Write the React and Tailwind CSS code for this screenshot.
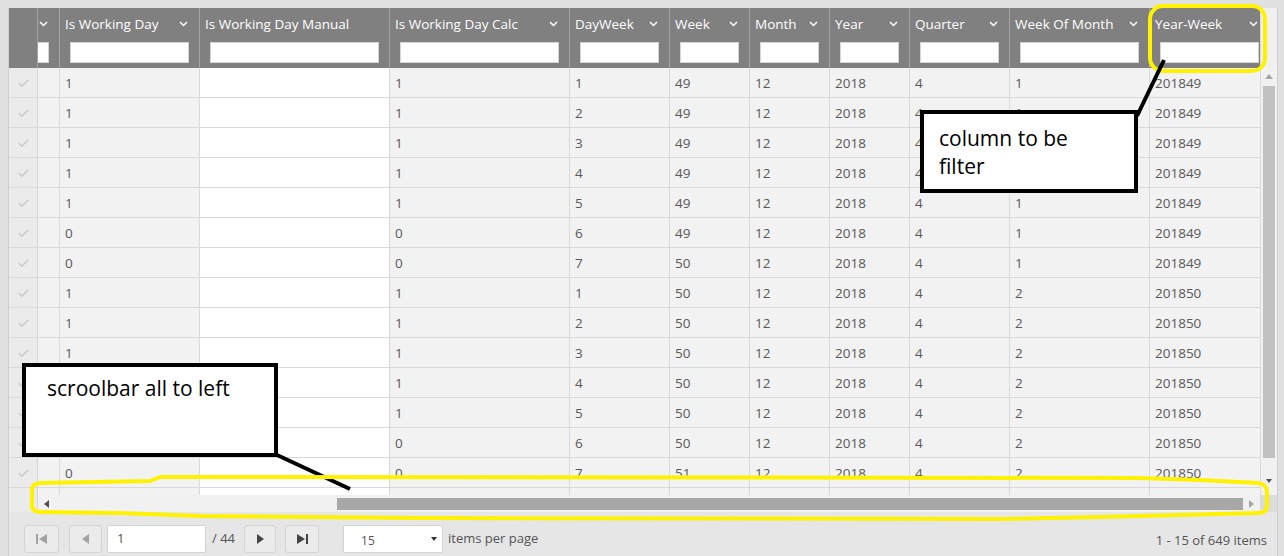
import React from "react";
import { Check } from "lucide-react";

const columns = [
  { title: "Is Working Day", width: 140, key: "iwd" },
  { title: "Is Working Day Manual", width: 190, key: "manual", noMenu: true, white: true },
  { title: "Is Working Day Calc", width: 180, key: "calc" },
  { title: "DayWeek", width: 100, key: "dw" },
  { title: "Week", width: 80, key: "week" },
  { title: "Month", width: 80, key: "month" },
  { title: "Year", width: 80, key: "year" },
  { title: "Quarter", width: 100, key: "q" },
  { title: "Week Of Month", width: 140, key: "wom" },
  { title: "Year-Week", width: 120, key: "yw" },
];

const raw = [
  [1, 1, 1, 49, 1, 201849],
  [1, 1, 2, 49, 1, 201849],
  [1, 1, 3, 49, 1, 201849],
  [1, 1, 4, 49, 1, 201849],
  [1, 1, 5, 49, 1, 201849],
  [0, 0, 6, 49, 1, 201849],
  [0, 0, 7, 50, 1, 201849],
  [1, 1, 1, 50, 2, 201850],
  [1, 1, 2, 50, 2, 201850],
  [1, 1, 3, 50, 2, 201850],
  [1, 1, 4, 50, 2, 201850],
  [1, 1, 5, 50, 2, 201850],
  [0, 0, 6, 50, 2, 201850],
  [0, 0, 7, 51, 2, 201850],
];

const rows = raw.map(([iwd, calc, dw, week, wom, yw]) => ({
  iwd,
  manual: "",
  calc,
  dw,
  week,
  month: 12,
  year: 2018,
  q: 4,
  wom,
  yw,
}));
// last row sits under the scrollbar, only its top edge shows
rows.push({});

const Chevron = () => (
  <svg width="9" height="6" viewBox="0 0 9 6" className="shrink-0">
    <path d="M1 1 L4.5 4.5 L8 1" fill="none" stroke="#ffffff" strokeWidth="1.5" />
  </svg>
);

const HeaderCell = ({ col }) => (
  <div
    className="flex flex-col shrink-0 border-l border-[#a3a3a3] overflow-hidden"
    style={{ width: col.width }}
  >
    <div className="h-[30px] flex items-center justify-between pl-[5px] pr-[11px] pt-[2px]">
      <span className="text-white text-[13.5px] whitespace-nowrap">{col.title}</span>
      {!col.noMenu && <Chevron />}
    </div>
    <div className="pl-[10px] pr-[10px] mt-[4px]">
      <div className="h-[21px] bg-white border border-[#d5d5d5]" />
    </div>
  </div>
);

// leftover column, scrolled nearly out of view
const PartialHeaderCell = () => (
  <div className="flex flex-col shrink-0 w-[21px] overflow-hidden">
    <div className="h-[30px] flex items-center justify-end pr-[11px] pt-[2px]">
      <Chevron />
    </div>
    <div className="flex justify-end pr-[10px] mt-[4px]">
      <div className="h-[21px] w-[100px] shrink-0 bg-white border border-[#d5d5d5]" />
    </div>
  </div>
);

const TriUp = ({ color = "#a6a6a6" }) => (
  <svg width="8" height="5" viewBox="0 0 8 5">
    <path d="M0 5 L4 0 L8 5 Z" fill={color} />
  </svg>
);
const TriDown = ({ color = "#505050" }) => (
  <svg width="6" height="4" viewBox="0 0 6 4">
    <path d="M0 0 L3 4 L6 0 Z" fill={color} />
  </svg>
);
const TriLeft = ({ color = "#505050" }) => (
  <svg width="5" height="8" viewBox="0 0 5 8">
    <path d="M5 0 L0 4 L5 8 Z" fill={color} />
  </svg>
);
const TriRight = ({ color = "#a6a6a6" }) => (
  <svg width="5" height="8" viewBox="0 0 5 8">
    <path d="M0 0 L5 4 L0 8 Z" fill={color} />
  </svg>
);

const PagerButton = ({ w, children }) => (
  <div
    className="h-[28px] flex items-center justify-center bg-[#ebebeb] border border-[#d3d3d3] rounded-[3px]"
    style={{ width: w }}
  >
    {children}
  </div>
);

const FirstIcon = ({ color }) => (
  <svg width="14" height="12" viewBox="0 0 14 12">
    <rect x="1" y="1" width="2" height="10" fill={color} />
    <path d="M12 1 L4 6 L12 11 Z" fill={color} />
  </svg>
);
const PrevIcon = ({ color }) => (
  <svg width="10" height="12" viewBox="0 0 10 12">
    <path d="M8 1 L1 6 L8 11 Z" fill={color} />
  </svg>
);
const NextIcon = ({ color }) => (
  <svg width="10" height="12" viewBox="0 0 10 12">
    <path d="M2 1 L9 6 L2 11 Z" fill={color} />
  </svg>
);
const LastIcon = ({ color }) => (
  <svg width="14" height="12" viewBox="0 0 14 12">
    <path d="M2 1 L10 6 L2 11 Z" fill={color} />
    <rect x="11" y="1" width="2" height="10" fill={color} />
  </svg>
);

export default function App() {
  return (
    <div className="relative w-[1284px] h-[556px] overflow-hidden bg-[#e1e1e1] font-['Open_Sans',sans-serif]">
      <div className="pt-[8px] pl-[8px]">
        <div className="w-[1270px] border-l border-r border-[#cfcfcf] bg-[#e6e6e6]">
          {/* header */}
          <div className="flex h-[60px]">
            <div className="w-[29px] shrink-0 bg-[#808080] border-r border-[#a3a3a3]" />
            <div className="w-[1222px] shrink-0 flex overflow-hidden bg-[#808080]">
              <PartialHeaderCell />
              {columns.map((col) => (
                <HeaderCell key={col.key} col={col} />
              ))}
            </div>
            <div className="w-[17px] shrink-0 bg-[#f0f0f0] border-l border-[#dadada]" />
          </div>

          {/* body */}
          <div className="flex h-[444px]">
            {/* locked check column */}
            <div className="w-[29px] shrink-0 flex flex-col bg-[#ebebeb] border-r border-[#d6d6d6]">
              <div className="h-[427px] overflow-hidden">
                {rows.slice(0, 14).map((r, i) => (
                  <div key={i} className="h-[30px] flex items-center justify-center border-b border-[#dadada] pt-[2px]">
                    <Check size={13} strokeWidth={2.5} color="#c9c9c9" />
                  </div>
                ))}
              </div>
            </div>

            <div className="w-[1222px] shrink-0 flex flex-col">
              <div className="h-[427px] overflow-hidden bg-[#f2f2f2]">
                {rows.map((r, i) => (
                  <div key={i} className="flex h-[30px] border-b border-[#d9d9d9] text-[13.5px] text-[#595959]">
                    <div className="w-[21px] shrink-0" />
                    {columns.map((col) => (
                      <div
                        key={col.key}
                        className={`shrink-0 flex items-center pl-[5px] pt-[2px] border-l border-[#d9d9d9] ${col.white ? "bg-white" : ""}`}
                        style={{ width: col.width }}
                      >
                        {r[col.key]}
                      </div>
                    ))}
                  </div>
                ))}
              </div>
              {/* horizontal scrollbar */}
              <div className="h-[17px] flex items-center bg-[#f1f1f1]">
                <div className="w-[17px] h-full flex items-center justify-center">
                  <TriLeft />
                </div>
                <div className="flex-1 h-full flex items-center">
                  <div className="ml-[282px] h-[12px] flex-1 bg-[#a8a8a8]" />
                </div>
                <div className="w-[17px] h-full flex items-center justify-center">
                  <TriRight />
                </div>
              </div>
            </div>

            {/* vertical scrollbar */}
            <div className="w-[17px] shrink-0 flex flex-col border-l border-[#dadada]">
              <div className="h-[427px] flex flex-col bg-[#f1f1f1]">
                <div className="h-[17px] flex items-center justify-center">
                  <TriUp />
                </div>
                <div className="flex-1 px-[2px] pt-[1px] pb-[20px]">
                  <div className="w-full h-full bg-[#c1c1c1]" />
                </div>
                <div className="h-[17px] flex items-start justify-center pt-[1px]">
                  <TriDown />
                </div>
              </div>
              <div className="h-[17px] bg-[#dcdcdc]" />
            </div>
          </div>

          {/* pager */}
          <div className="h-[60px] flex items-start pt-[13px] pl-[15px] pr-[10px] text-[13px] text-[#555555]">
            <PagerButton w={35}>
              <FirstIcon color="#a3a3a3" />
            </PagerButton>
            <div className="ml-[10px]">
              <PagerButton w={33}>
                <PrevIcon color="#a3a3a3" />
              </PagerButton>
            </div>
            <div className="ml-[5px] w-[99px] h-[28px] bg-white border border-[#d3d3d3] rounded-[2px] flex items-center pl-[9px]">
              1
            </div>
            <span className="ml-[6px] h-[28px] flex items-center">/ 44</span>
            <div className="ml-[9px]">
              <PagerButton w={32}>
                <NextIcon color="#444444" />
              </PagerButton>
            </div>
            <div className="ml-[9px]">
              <PagerButton w={34}>
                <LastIcon color="#444444" />
              </PagerButton>
            </div>
            <div className="ml-[24px] w-[100px] h-[28px] bg-white border border-[#d3d3d3] rounded-[2px] flex items-center justify-between pl-[17px] pr-[5px] text-[12px]">
              <span className="mt-[3px]">15</span>
              <TriDown color="#333333" />
            </div>
            <span className="ml-[5px] h-[28px] flex items-center">items per page</span>
            <span className="ml-auto h-[28px] flex items-center mt-[2px]">1 - 15 of 649 items</span>
          </div>
        </div>
      </div>

      {/* annotations drawn over the grid */}
      <svg className="absolute inset-0 pointer-events-none" width="1284" height="556" viewBox="0 0 1284 556">
        <rect x="1150" y="6" width="115" height="65" rx="13" fill="none" stroke="#fff200" strokeWidth="4" />
        <line x1="1137" y1="116" x2="1164" y2="60" stroke="#000" strokeWidth="4" />
        <line x1="277" y1="455" x2="350" y2="489" stroke="#000" strokeWidth="4" />
        <path
          d="M40 483 L150 481 L160 477 L1140 478 L1200 480 L1258 483 Q1267 484 1267 492 L1267 506 Q1267 513 1258 513 L1100 517 L1000 519 L420 518 L200 516 L120 513 L40 512 Q32 512 32 505 L32 490 Q32 484 40 483 Z"
          fill="none"
          stroke="#fff200"
          strokeWidth="4"
          strokeLinejoin="round"
        />
      </svg>

      <div className="absolute left-[920px] top-[110px] w-[218px] h-[83px] bg-white border-[4px] border-black pl-[15px] pt-[10px] text-[21px] leading-[28px] text-black">
        column to be
        <br />
        filter
      </div>
      <div className="absolute left-[22px] top-[363px] w-[256px] h-[94px] bg-white border-[4px] border-black pl-[21px] pt-[7px] text-[21px] leading-[28px] text-black">
        scroolbar all to left
      </div>
    </div>
  );
}
